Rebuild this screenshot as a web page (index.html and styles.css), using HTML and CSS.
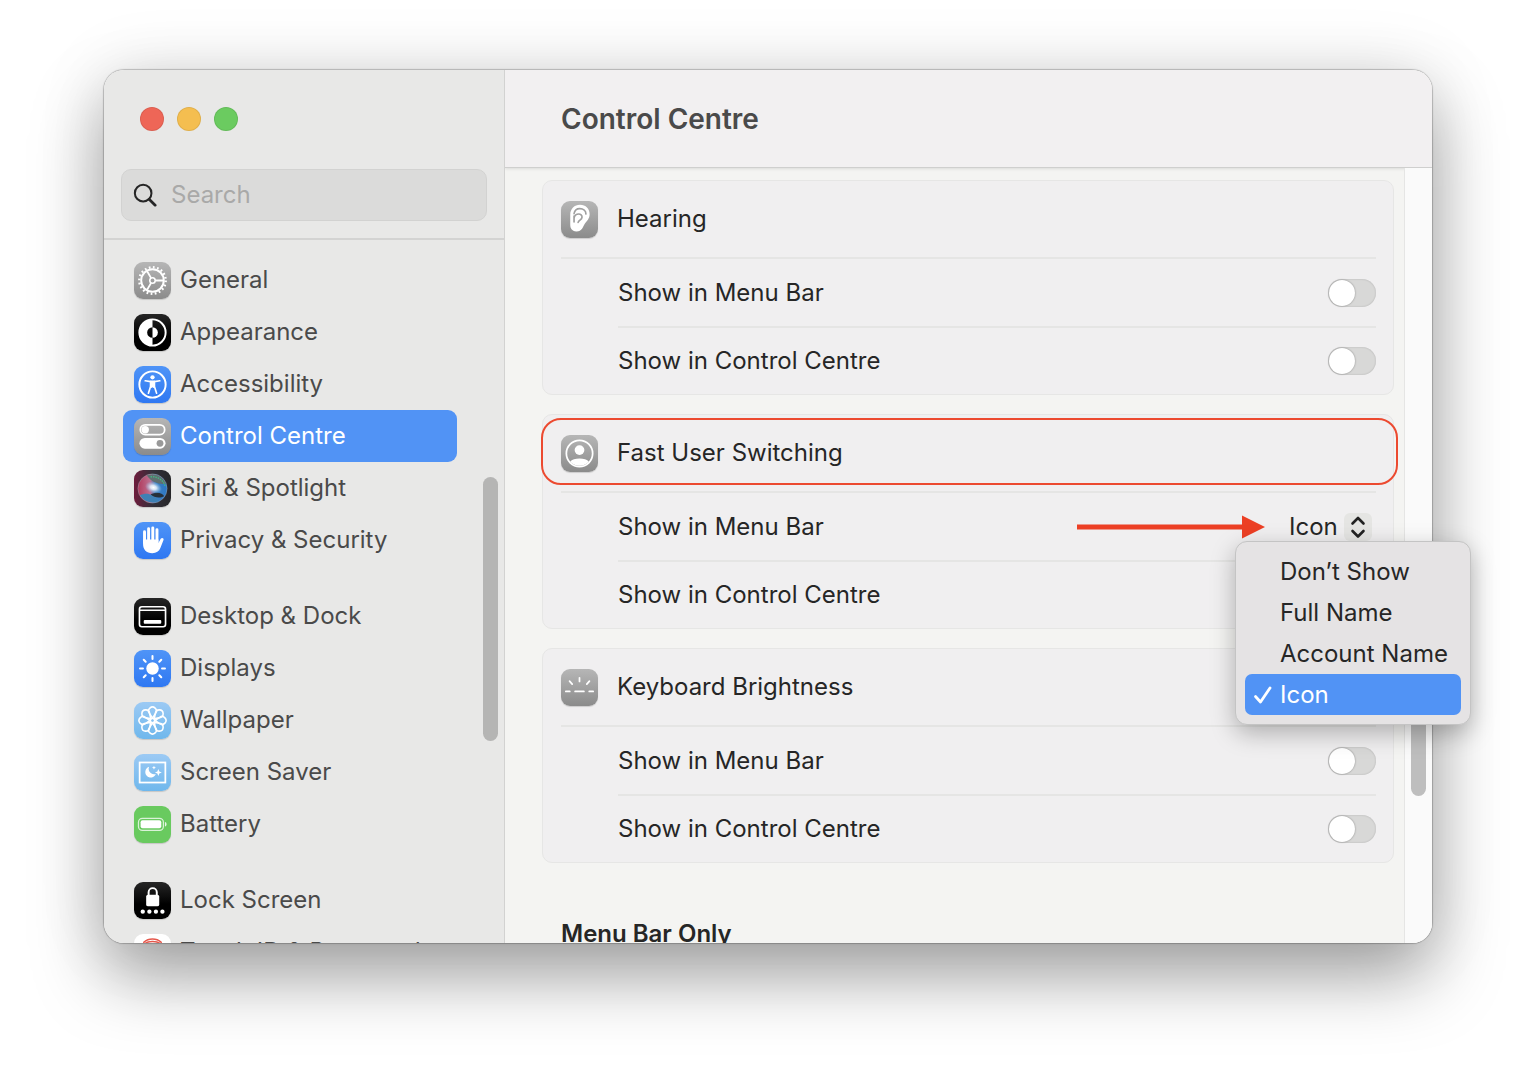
FILE: index.html
```html
<!DOCTYPE html>
<html lang="en-GB">
<head>
    <meta charset="UTF-8">
    <meta name="viewport" content="width=device-width, initial-scale=1.0">
    <title>Control Centre</title>
    <link rel="stylesheet" href="styles.css">
</head>
<body>

    <div class="window">

        <!-- Sidebar -->
        <aside class="sidebar">
            <div class="traffic-lights">
                <button class="light red" aria-label="Close"></button>
                <button class="light yellow" aria-label="Minimise"></button>
                <button class="light green" aria-label="Zoom"></button>
            </div>

            <label class="search">
                <svg width="24" height="24" viewBox="0 0 26 26" fill="none" stroke="#262626" stroke-linecap="round">
                    <circle cx="11" cy="11" r="9" stroke-width="2.2"/>
                    <path d="M17.5 17.5L24 24" stroke-width="3"/>
                </svg>
                <input type="search" placeholder="Search" aria-label="Search">
            </label>

            <nav class="nav">
                <ul>
                    <li><a href="#">
                        <svg class="icon grey" viewBox="0 0 38 38" fill="none" stroke="#fff">
                            <circle cx="19" cy="19" r="11.6" stroke-width="2"/>
                            <circle cx="19" cy="19" r="13.6" stroke-width="2.4" stroke-dasharray="1.8 2.472"/>
                            <circle cx="19" cy="19" r="2.8" stroke-width="1.6"/>
                            <path d="M22 19H30M17.5 16.4L13.2 9M17.5 21.6L13.2 29" stroke-width="1.8"/>
                        </svg>
                        General</a></li>
                    <li><a href="#">
                        <svg class="icon black" viewBox="0 0 38 38">
                            <circle cx="19" cy="19" r="13.5" fill="none" stroke="#fff" stroke-width="2"/>
                            <path d="M19 5.5A13.5 13.5 0 0 0 19 32.5V24.5A5.5 5.5 0 0 1 19 13.5Z" fill="#fff"/>
                            <path d="M19 13.5A5.5 5.5 0 0 1 19 24.5Z" fill="#fff"/>
                        </svg>
                        Appearance</a></li>
                    <li><a href="#">
                        <svg class="icon blue" viewBox="0 0 38 38">
                            <circle cx="19" cy="19" r="13.5" fill="none" stroke="#fff" stroke-width="2"/>
                            <circle cx="19" cy="11.6" r="2.2" fill="#fff"/>
                            <path d="M11.5 15.2L17 16V21L14.8 28M26.5 15.2L21 16V21L23.2 28" fill="none" stroke="#fff" stroke-width="1.7" stroke-linecap="round" stroke-linejoin="round"/>
                            <path d="M16.6 15H21.4V22L20 22.6L19 21.8L18 22.6L16.6 22Z" fill="#fff"/>
                        </svg>
                        Accessibility</a></li>
                    <li><a href="#" class="selected" aria-current="page">
                        <svg class="icon grey" viewBox="0 0 38 38">
                            <rect x="6.5" y="7" width="25" height="10" rx="5" fill="none" stroke="#fff" stroke-width="1.8"/>
                            <circle cx="11.5" cy="12" r="3.8" fill="#fff"/>
                            <rect x="5.6" y="20.5" width="26.8" height="11" rx="5.5" fill="#fff"/>
                            <circle cx="26.7" cy="26" r="3.5" fill="#999"/>
                        </svg>
                        Control Centre</a></li>
                    <li><a href="#">
                        <svg class="icon siri" viewBox="0 0 38 38">
                            <defs>
                                <radialGradient id="glow">
                                    <stop offset="0" stop-color="#fff"/>
                                    <stop offset=".35" stop-color="#e6f0fa" stop-opacity=".9"/>
                                    <stop offset="1" stop-color="#8fc3f0" stop-opacity="0"/>
                                </radialGradient>
                                <linearGradient id="orb" x1="0" y1="0" x2="1" y2="0">
                                    <stop offset="0" stop-color="#b03a5c"/>
                                    <stop offset=".42" stop-color="#bd7090"/>
                                    <stop offset=".6" stop-color="#3f7fc0"/>
                                    <stop offset="1" stop-color="#2c78c4"/>
                                </linearGradient>
                            </defs>
                            <circle cx="19" cy="19" r="15" fill="url(#orb)"/>
                            <path d="M13 5.5A15 15 0 0 1 33 14C27 15 19 14 13 5.5Z" fill="#5f6f70"/>
                            <path d="M6 26C13 23 19 24 25 32A15 15 0 0 1 6 26Z" fill="#3e80b4"/>
                            <path d="M17 25C23 22 29 23 31 27C27 29 21 29 17 25Z" fill="#26303a"/>
                            <path d="M17 7C24 6 31 11 32 17" fill="none" stroke="#42b883" stroke-width="1.4" stroke-dasharray="1.5 1"/>
                            <circle cx="19" cy="19" r="15" fill="none" stroke="#a8b4c4" stroke-opacity=".4"/>
                            <ellipse cx="20" cy="18" rx="9" ry="6" fill="url(#glow)" transform="rotate(18 20 18)"/>
                        </svg>
                        Siri &amp; Spotlight</a></li>
                    <li><a href="#">
                        <svg class="icon blue" viewBox="0 0 38 38">
                            <path d="M10.8 10V21M15 7V20M19.3 6V20M23.6 8V20" stroke="#fff" stroke-width="3" stroke-linecap="round"/>
                            <path d="M9.3 18H25.1V21.5L27.4 17.3C28.4 15.6 31 16.3 30.3 18.6L27.2 26.4C25.7 30.2 23 32 18.8 32C12.6 32 9.3 28.2 9.3 22.5Z" fill="#fff"/>
                        </svg>
                        Privacy &amp; Security</a></li>
                </ul>
                <ul>
                    <li><a href="#">
                        <svg class="icon black" viewBox="0 0 38 38">
                            <rect x="5.6" y="9" width="26.8" height="20.5" rx="2.5" fill="none" stroke="#fff" stroke-width="1.7"/>
                            <path d="M6 12.6H32" stroke="#fff" stroke-width="1.7"/>
                            <rect x="10" y="22.5" width="18" height="4" rx="1" fill="#fff"/>
                        </svg>
                        Desktop &amp; Dock</a></li>
                    <li><a href="#">
                        <svg class="icon blue" viewBox="0 0 38 38" stroke="#fff" stroke-width="2.1" stroke-linecap="round">
                            <circle cx="19" cy="19" r="6.4" fill="#fff" stroke="none"/>
                            <path d="M19 6.2V9.2M19 28.8V31.8M6.2 19H9.2M28.8 19H31.8M10 10L12 12M26 26L28 28M28 10L26 12M12 26L10 28"/>
                        </svg>
                        Displays</a></li>
                    <li><a href="#">
                        <svg class="icon sky" viewBox="0 0 38 38" fill="none" stroke="#fff" stroke-width="1.6">
                            <circle cx="19" cy="19" r="2.4"/>
                            <g id="petals">
                                <path d="M19 16.5L15.8 11.6A4 4 0 1 1 22.2 11.6Z"/>
                                <path d="M19 16.5L15.8 11.6A4 4 0 1 1 22.2 11.6Z" transform="rotate(45 19 19)"/>
                                <path d="M19 16.5L15.8 11.6A4 4 0 1 1 22.2 11.6Z" transform="rotate(90 19 19)"/>
                                <path d="M19 16.5L15.8 11.6A4 4 0 1 1 22.2 11.6Z" transform="rotate(135 19 19)"/>
                            </g>
                            <use href="#petals" transform="rotate(180 19 19)"/>
                        </svg>
                        Wallpaper</a></li>
                    <li><a href="#">
                        <svg class="icon sky" viewBox="0 0 38 38" fill="#fff">
                            <rect x="5.8" y="8.7" width="26.4" height="20.6" fill="none" stroke="#fff" stroke-width="1.8"/>
                            <path d="M15.5 13.2A5.6 5.6 0 1 0 22.4 20.6A5.6 5.6 0 0 1 15.5 13.2Z"/>
                            <path d="M25 15.5L26 18L28.5 19L26 20L25 22.5L24 20L21.5 19L24 18Z"/>
                            <path d="M20.5 12L21.1 13.4L22.5 14L21.1 14.6L20.5 16L19.9 14.6L18.5 14L19.9 13.4Z"/>
                        </svg>
                        Screen Saver</a></li>
                    <li><a href="#">
                        <svg class="icon lime" viewBox="0 0 38 38">
                            <rect x="4.6" y="12.6" width="25.6" height="12.4" rx="4" fill="none" stroke="#fff" stroke-width="1.3" stroke-opacity=".75"/>
                            <rect x="6.8" y="14.7" width="21.2" height="8.2" rx="2" fill="#fff"/>
                            <path d="M31.8 16.5C34 17 34 20.6 31.8 21.1Z" fill="#fff" fill-opacity=".85"/>
                        </svg>
                        Battery</a></li>
                </ul>
                <ul>
                    <li><a href="#">
                        <svg class="icon black" viewBox="0 0 38 38" fill="#fff">
                            <path d="M15 14V10.5A4.2 4.2 0 0 1 23.4 10.5V14" fill="none" stroke="#fff" stroke-width="2"/>
                            <rect x="12.5" y="13" width="13.4" height="12" rx="2"/>
                            <circle cx="9" cy="30.5" r="2.2"/>
                            <circle cx="15.8" cy="30.5" r="2.2"/>
                            <circle cx="22.5" cy="30.5" r="2.2"/>
                            <circle cx="29.2" cy="30.5" r="2.2"/>
                        </svg>
                        Lock Screen</a></li>
                    <li><a href="#">
                        <svg class="icon white" viewBox="0 0 38 38" fill="none" stroke="#e5584c" stroke-width="1.5" stroke-linecap="round">
                            <path d="M10 8.5C15 4 23 4 28 8.5M7 14C12 5.5 26 5.5 31 14M7.5 20C8 7 30 7 30.5 20M11 24C9 10 28 10 27 24M15 27C13 14 24 14 23 27M19 19V30"/>
                        </svg>
                        Touch ID &amp; Password</a></li>
                </ul>
            </nav>
            <div class="sidebar-thumb"></div>
        </aside>

        <!-- Main panel -->
        <main class="main">
            <header class="title-bar">
                <h1>Control Centre</h1>
            </header>

            <div class="panel">
                <div class="content">

                    <section class="card">
                        <div class="card-head">
                            <svg class="icon grey" viewBox="0 0 38 38">
                                <path d="M9.5 14C9.5 8 13.8 3.8 19.5 3.8C25.6 3.8 29.4 8 29.4 13.5C29.4 18 26.8 20 24.6 23C22.4 26.2 21.8 31.2 15.8 31.2C11 31.2 9.5 28 9.5 24.5Z" fill="#fff"/>
                                <path d="M13.4 13C14 9.6 16 7.9 19.3 7.9C23 7.9 25.6 10.2 25.6 13.4M13.4 21.5V15.5M13.4 17.2C15 12 21.8 12.4 21.6 16.6C21.4 19.6 18.2 19.6 17.6 22" fill="none" stroke="#a0a0a0" stroke-width="1.7" stroke-linecap="round"/>
                            </svg>
                            <h2>Hearing</h2>
                        </div>
                        <div class="row">
                            <label for="hearing-menu">Show in Menu Bar</label>
                            <input type="checkbox" class="toggle" id="hearing-menu">
                        </div>
                        <div class="row">
                            <label for="hearing-centre">Show in Control Centre</label>
                            <input type="checkbox" class="toggle" id="hearing-centre">
                        </div>
                    </section>

                    <section class="card highlighted">
                        <div class="card-head">
                            <svg class="icon grey" viewBox="0 0 38 38">
                                <circle cx="19" cy="19" r="13.5" fill="none" stroke="#fff" stroke-width="1.8"/>
                                <circle cx="19" cy="15.5" r="5" fill="#fff"/>
                                <path d="M9.4 27.4C12.5 23 25.5 23 28.6 27.4C23.5 33 14.5 33 9.4 27.4Z" fill="#fff"/>
                            </svg>
                            <h2>Fast User Switching</h2>
                        </div>
                        <div class="row">
                            <label for="switching-menu">Show in Menu Bar</label>
                            <svg class="arrow" width="188" height="24" viewBox="0 0 188 24" fill="#ec3f24">
                                <path d="M0 9.5H165V0.5L188 12L165 23.5V14.5H0Z"/>
                            </svg>
                            <div class="popup">
                                <select id="switching-menu">
                                    <option>Don’t Show</option>
                                    <option>Full Name</option>
                                    <option>Account Name</option>
                                    <option selected>Icon</option>
                                </select>
                                <svg class="stepper" viewBox="0 0 28 28" fill="none" stroke="#222" stroke-width="2.6" stroke-linecap="round" stroke-linejoin="round">
                                    <path d="M8.5 10.5L14 5L19.5 10.5M8.5 18L14 23.5L19.5 18"/>
                                </svg>
                            </div>
                        </div>
                        <div class="row">
                            <label for="switching-centre">Show in Control Centre</label>
                            <input type="checkbox" class="toggle" id="switching-centre">
                        </div>
                    </section>

                    <section class="card">
                        <div class="card-head">
                            <svg class="icon grey" viewBox="0 0 38 38" stroke="#fff" stroke-width="1.8" stroke-linecap="round">
                                <path d="M5 23H9M14.5 23H23.5M29 23H33M19 9V12.8M8.8 12.5L11.5 15.5M29.2 12.5L26.5 15.5"/>
                            </svg>
                            <h2>Keyboard Brightness</h2>
                        </div>
                        <div class="row">
                            <label for="keyboard-menu">Show in Menu Bar</label>
                            <input type="checkbox" class="toggle" id="keyboard-menu">
                        </div>
                        <div class="row">
                            <label for="keyboard-centre">Show in Control Centre</label>
                            <input type="checkbox" class="toggle" id="keyboard-centre">
                        </div>
                    </section>

                    <h2 class="section-title">Menu Bar Only</h2>
                </div>

                <div class="scroll-track">
                    <div class="scroll-thumb"></div>
                </div>
            </div>
        </main>

        <!-- Open pop-up menu -->
        <div class="menu">
            <button>Don’t Show</button>
            <button>Full Name</button>
            <button>Account Name</button>
            <button class="chosen">
                <svg class="check" width="20" height="20" viewBox="0 0 20 20" fill="none" stroke="#fff" stroke-width="2.8" stroke-linecap="round" stroke-linejoin="round">
                    <path d="M2.5 11.5L7.5 17L17 3"/>
                </svg>
                Icon</button>
        </div>

    </div>

</body>
</html>
```

FILE: styles.css
```css
*, *::before, *::after {
    box-sizing: border-box;
}

body {
    margin: 0;
    height: 100vh;
    padding: 70px 104px 138px;
    background-color: #fff;
    font-family: 'Inter', 'Liberation Sans', sans-serif;
    font-size: 24px;
    line-height: 30px;
    color: #262626;
    overflow: hidden;
}

h1, h2, ul {
    margin: 0;
    padding: 0;
}

button, input, select {
    font: inherit;
    color: inherit;
}

.window {
    position: relative;
    display: flex;
    height: 100%;
    border-radius: 20px;
    box-shadow: 0 0 1px 1px rgba(0, 0, 0, 0.22), 0 34px 70px rgba(0, 0, 0, 0.35), 0 0 70px rgba(0, 0, 0, 0.1);
}

/* Sidebar */
.sidebar {
    position: relative;
    display: flex;
    flex-direction: column;
    flex: none;
    width: 401px;
    background-color: #e8e8e7;
    border-right: 1px solid #d2d2d1;
    border-radius: 20px 0 0 20px;
    overflow: hidden;
}

.traffic-lights {
    display: flex;
    gap: 13px;
    padding: 37px 36px;
}

.light {
    width: 24px;
    height: 24px;
    padding: 0;
    border: 1px solid rgba(0, 0, 0, 0.08);
    border-radius: 50%;
}

.light.red {
    background-color: #ee6657;
}

.light.yellow {
    background-color: #f4be50;
}

.light.green {
    background-color: #6bcb60;
}

.search {
    display: flex;
    align-items: center;
    gap: 14px;
    height: 52px;
    margin: 1px 17px 17px;
    padding: 0 11px;
    background-color: #dbdbda;
    border: 1px solid #d2d2d1;
    border-radius: 10px;
}

.search input {
    flex: 1;
    min-width: 0;
    padding: 0;
    border: none;
    outline: none;
    background: none;
}

.search input::placeholder {
    color: #a9a9a8;
}

.nav {
    display: flex;
    flex-direction: column;
    flex: 1;
    gap: 24px;
    min-height: 0;
    padding: 14px 47px 0 19px;
    border-top: 2px solid #d3d3d2;
    overflow: hidden;
}

.nav ul {
    list-style: none;
}

.nav a {
    display: flex;
    align-items: center;
    gap: 9px;
    height: 52px;
    padding: 0 11px;
    border-radius: 9px;
    color: #4a4a4a;
    text-decoration: none;
    white-space: nowrap;
}

.nav a.selected {
    background-color: #5193f5;
    color: #fff;
}

.icon {
    flex: none;
    width: 37px;
    height: 37px;
    border-radius: 9px;
    box-shadow: 0 1px 1px rgba(0, 0, 0, 0.15);
}

.icon.grey {
    background: linear-gradient(#b6b6b6, #8b8b8b);
}

.icon.black {
    background: linear-gradient(#262626, #000 60%);
}

.icon.blue {
    background: linear-gradient(#4f94f7, #2f78f2);
}

.icon.sky {
    background: linear-gradient(#9ccaf4, #6fb7ec);
}

.icon.lime {
    background-color: #69ca5f;
}

.icon.white {
    background-color: #fff;
}

.icon.siri {
    background: linear-gradient(90deg, #6e1c3c, #33303a 50%, #262628);
}

.sidebar-thumb {
    position: absolute;
    top: 407px;
    right: 6px;
    width: 15px;
    height: 264px;
    border-radius: 8px;
    background-color: #b5b5b4;
}

/* Main panel */
.main {
    display: flex;
    flex-direction: column;
    flex: 1;
    min-width: 0;
    background-color: #f4f4f2;
    border-radius: 0 20px 20px 0;
    overflow: hidden;
}

.title-bar {
    display: flex;
    align-items: center;
    flex: none;
    height: 98px;
    padding-left: 56px;
    background-color: #f2f0f1;
    border-bottom: 1px solid #cfcfce;
    box-shadow: 0 1px 3px rgba(0, 0, 0, 0.1);
}

.title-bar h1 {
    font-size: 28px;
    font-weight: 600;
    color: #4a4a4a;
}

.panel {
    display: flex;
    flex: 1;
    min-height: 0;
}

.content {
    display: flex;
    flex-direction: column;
    flex: 1;
    gap: 19px;
    padding: 12px 10px 0 37px;
    overflow: hidden;
}

.card {
    position: relative;
    flex: none;
    padding: 0 17px 0 18px;
    background-color: #f0eff0;
    border: 1px solid #e6e6e5;
    border-radius: 10px;
}

.card-head {
    display: flex;
    align-items: center;
    gap: 19px;
    height: 78px;
    border-bottom: 2px solid #e5e5e4;
}

.card-head h2 {
    font-size: 24px;
    font-weight: 400;
}

.row {
    display: flex;
    align-items: center;
    height: 69px;
    margin-left: 57px;
    border-bottom: 2px solid #e5e5e4;
}

.row:last-child {
    height: 66px;
    border-bottom: none;
}

.row label {
    flex: 1;
}

/* Red outline round the card's heading */
.highlighted::after {
    content: "";
    position: absolute;
    top: 3px;
    left: -2px;
    right: -5px;
    height: 67px;
    border: 2px solid #ec4a30;
    border-radius: 20px;
    pointer-events: none;
}

.toggle {
    appearance: none;
    display: flex;
    align-items: center;
    width: 48px;
    height: 28px;
    margin: 0;
    padding: 1px;
    border-radius: 14px;
    background-color: #d8d8d7;
    box-shadow: inset 0 0 2px rgba(0, 0, 0, 0.2);
}

.toggle::before {
    content: "";
    width: 26px;
    height: 26px;
    border-radius: 50%;
    background-color: #fff;
    box-shadow: 0 0 2px rgba(0, 0, 0, 0.4);
}

.toggle:checked {
    justify-content: flex-end;
    background-color: #5193f5;
}

.arrow {
    margin-right: 24px;
}

.popup {
    position: relative;
    width: 83px;
    margin-right: 4px;
}

.popup select {
    appearance: none;
    display: block;
    width: 100%;
    height: 30px;
    padding: 0;
    border: none;
    outline: none;
    background: none;
}

.stepper {
    position: absolute;
    top: 1px;
    right: 0;
    width: 28px;
    height: 28px;
    border-radius: 6px;
    background-color: #e5e5e3;
    pointer-events: none;
}

.section-title {
    flex: none;
    margin-top: 37px;
    padding-left: 19px;
    font-size: 24px;
    font-weight: 600;
}

.scroll-track {
    flex: none;
    width: 28px;
    padding: 400px 6px 0;
    background-color: #fafafa;
    border-left: 1px solid #e5e5e4;
}

.scroll-thumb {
    width: 15px;
    height: 228px;
    border-radius: 8px;
    background-color: #bebebe;
}

/* Pop-up menu */
.menu {
    position: absolute;
    top: 471px;
    right: -39px;
    width: 236px;
    padding: 9px;
    background-color: #e5e3e4;
    border: 1px solid #c4c4c4;
    border-radius: 12px;
    box-shadow: 0 8px 24px rgba(0, 0, 0, 0.28);
}

.menu button {
    position: relative;
    display: block;
    width: 100%;
    height: 41px;
    padding: 0 0 0 35px;
    border: none;
    border-radius: 7px;
    background: none;
    text-align: left;
    white-space: nowrap;
}

.menu button.chosen {
    background-color: #5193f5;
    color: #fff;
}

.check {
    position: absolute;
    top: 11px;
    left: 8px;
}
```
